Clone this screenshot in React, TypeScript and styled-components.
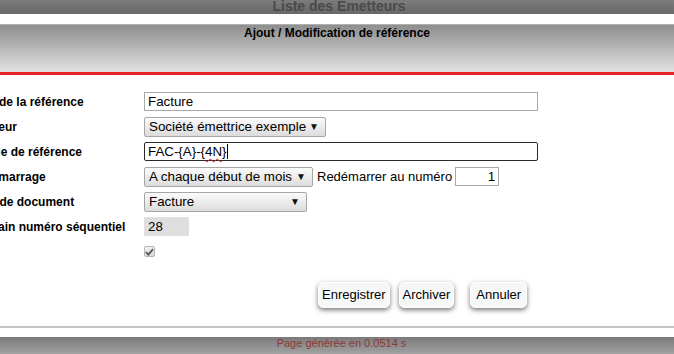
import React from 'react';
import styled, { createGlobalStyle } from 'styled-components';

const GlobalStyle = createGlobalStyle`
  html, body { margin: 0; padding: 0; background: #fff; }
  body { font-family: "Liberation Sans", Arial, sans-serif; overflow: hidden; }
`

const Page = styled.div`
  width: 674px;
  height: 354px;
  display: flex;
  flex-direction: column;
  overflow: hidden;
  & > * { flex: none; }
`
const TopBar = styled.div`
  height: 14px;
  background: linear-gradient(#7c7c7c, #686868);
  color: #4a4a4a;
  font-weight: bold;
  font-size: 14px;
  line-height: 12px;
  text-align: center;
  overflow: hidden;
  padding-left: 4px;
`
const WhiteBand = styled.div`
  height: 10px;
  border-bottom: 1px solid #b0b0b0;
  background: #fff;
`
const Header = styled.div`
  height: 46px;
  background: linear-gradient(#8e8e8e, #e2e2e2);
  border-bottom: 3px solid #e8242b;
  text-align: center;
  font-weight: bold;
  font-size: 12px;
  line-height: 15px;
  padding-top: 1px;
  color: #000;
`
const Form = styled.div`
  display: flex;
  flex-direction: column;
  margin-left: -31px;
  padding-top: 14px;
`
const Row = styled.div`
  display: flex;
  align-items: center;
  height: 25px;
`
const Label = styled.div<{ $nudge?: number }>`
  width: 175px;
  flex: none;
  font-weight: bold;
  font-size: 12px;
  color: #000;
  white-space: nowrap;
  text-indent: -${p => p.$nudge || 0}px;
`
const TextBox = styled.div<{ $w: number; $focus?: boolean; $ro?: boolean; $right?: boolean }>`
  box-sizing: border-box;
  width: ${p => p.$w}px;
  height: 19px;
  border: 1px solid ${p => (p.$focus ? '#2a2a2a' : p.$ro ? '#e0e0e0' : '#a9a9a9')};
  border-radius: ${p => (p.$focus ? '2px' : '0')};
  background: ${p => (p.$ro ? '#dedede' : '#fff')};
  font-size: 13.33px;
  line-height: 17px;
  padding: 0 3px;
  text-align: ${p => (p.$right ? 'right' : 'left')};
  color: #000;
  white-space: nowrap;
`
const Squiggle = styled.span`
  text-decoration: underline wavy #e03030;
  text-decoration-thickness: 1px;
  text-underline-offset: 2px;
`
const Caret = styled.span`
  display: inline-block;
  width: 1px;
  height: 15px;
  background: #000;
  vertical-align: -3px;
`
const Select = styled.div<{ $w: number }>`
  box-sizing: border-box;
  width: ${p => p.$w}px;
  height: 20px;
  border: 1px solid #a6a6a6;
  border-radius: 2px;
  background: linear-gradient(#fbfbfb, #dcdcdc);
  display: flex;
  align-items: center;
  justify-content: space-between;
  padding: 0 6px 0 4px;
  font-size: 13.33px;
  color: #000;
  white-space: nowrap;
`
const Arrow = styled.span`
  font-size: 10px;
  color: #111;
`
const Inline = styled.span`
  font-size: 13px;
  margin: 0 3px 0 4px;
  color: #000;
`
const Check = styled.div`
  box-sizing: border-box;
  width: 11px;
  height: 11px;
  border: 1px solid #b4b4b4;
  border-radius: 2px;
  background: linear-gradient(#f2f2f2, #d8d8d8);
  display: flex;
  align-items: center;
  justify-content: center;
`
const Buttons = styled.div`
  display: flex;
  padding-left: 349px;
  margin-top: 18px;
`
const Button = styled.div<{ $gap: number; $pad: number }>`
  margin-left: ${p => p.$gap}px;
  height: 26px;
  box-sizing: border-box;
  padding: 0 ${p => p.$pad}px;
  background: #f6f8f8;
  border: 1px solid #fff;
  border-radius: 5px;
  box-shadow: 0 2px 5px rgba(0, 0, 0, 0.55);
  font-size: 13px;
  line-height: 24px;
  color: #000;
`
const Spacer = styled.div`
  flex: 1 !important;
`
const Rule = styled.div`
  height: 2px;
  background: #c4c4c4;
  margin-bottom: 9px;
`
const Footer = styled.div`
  height: 17px;
  background: linear-gradient(#7a7a7a, #a2a2a2);
  color: #8e3838;
  font-size: 11px;
  line-height: 13px;
  text-align: center;
  padding-left: 9px;
`

const App = () => (
  <Page>
    <GlobalStyle />
    <TopBar>Liste des Emetteurs</TopBar>
    <WhiteBand />
    <Header>Ajout / Modification de référence</Header>
    <Form>
      <Row>
        <Label>Nom de la référence</Label>
        <TextBox $w={394}>Facture</TextBox>
      </Row>
      <Row>
        <Label $nudge={4}>Emetteur</Label>
        <Select $w={182}>Société émettrice exemple <Arrow>▼</Arrow></Select>
      </Row>
      <Row>
        <Label $nudge={3}>Modèle de référence</Label>
        <TextBox $w={394} $focus>FAC-{'{A}'}-{'{'}<Squiggle>4N</Squiggle>{'}'}<Caret /></TextBox>
      </Row>
      <Row>
        <Label>Redémarrage</Label>
        <Select $w={169}>A chaque début de mois <Arrow>▼</Arrow></Select>
        <Inline>Redémarrer au numéro</Inline>
        <TextBox $w={44} $right>1</TextBox>
      </Row>
      <Row>
        <Label>Type de document</Label>
        <Select $w={163}>Facture <Arrow>▼</Arrow></Select>
      </Row>
      <Row>
        <Label $nudge={5}>Prochain numéro séquentiel</Label>
        <TextBox $w={45} $ro>28</TextBox>
      </Row>
      <Row>
        <Label />
        <Check>
          <svg width="9" height="8" viewBox="0 0 9 8">
            <path d="M1 4.2 L3.4 6.6 L8 1.2" fill="none" stroke="#555" strokeWidth="1.8" />
          </svg>
        </Check>
      </Row>
      <Buttons>
        <Button $gap={0} $pad={3}>Enregistrer</Button>
        <Button $gap={9} $pad={3}>Archiver</Button>
        <Button $gap={16} $pad={5}>Annuler</Button>
      </Buttons>
    </Form>
    <Spacer />
    <Rule />
    <Footer>Page générée en 0.0514 s</Footer>
  </Page>
);

export default App;
